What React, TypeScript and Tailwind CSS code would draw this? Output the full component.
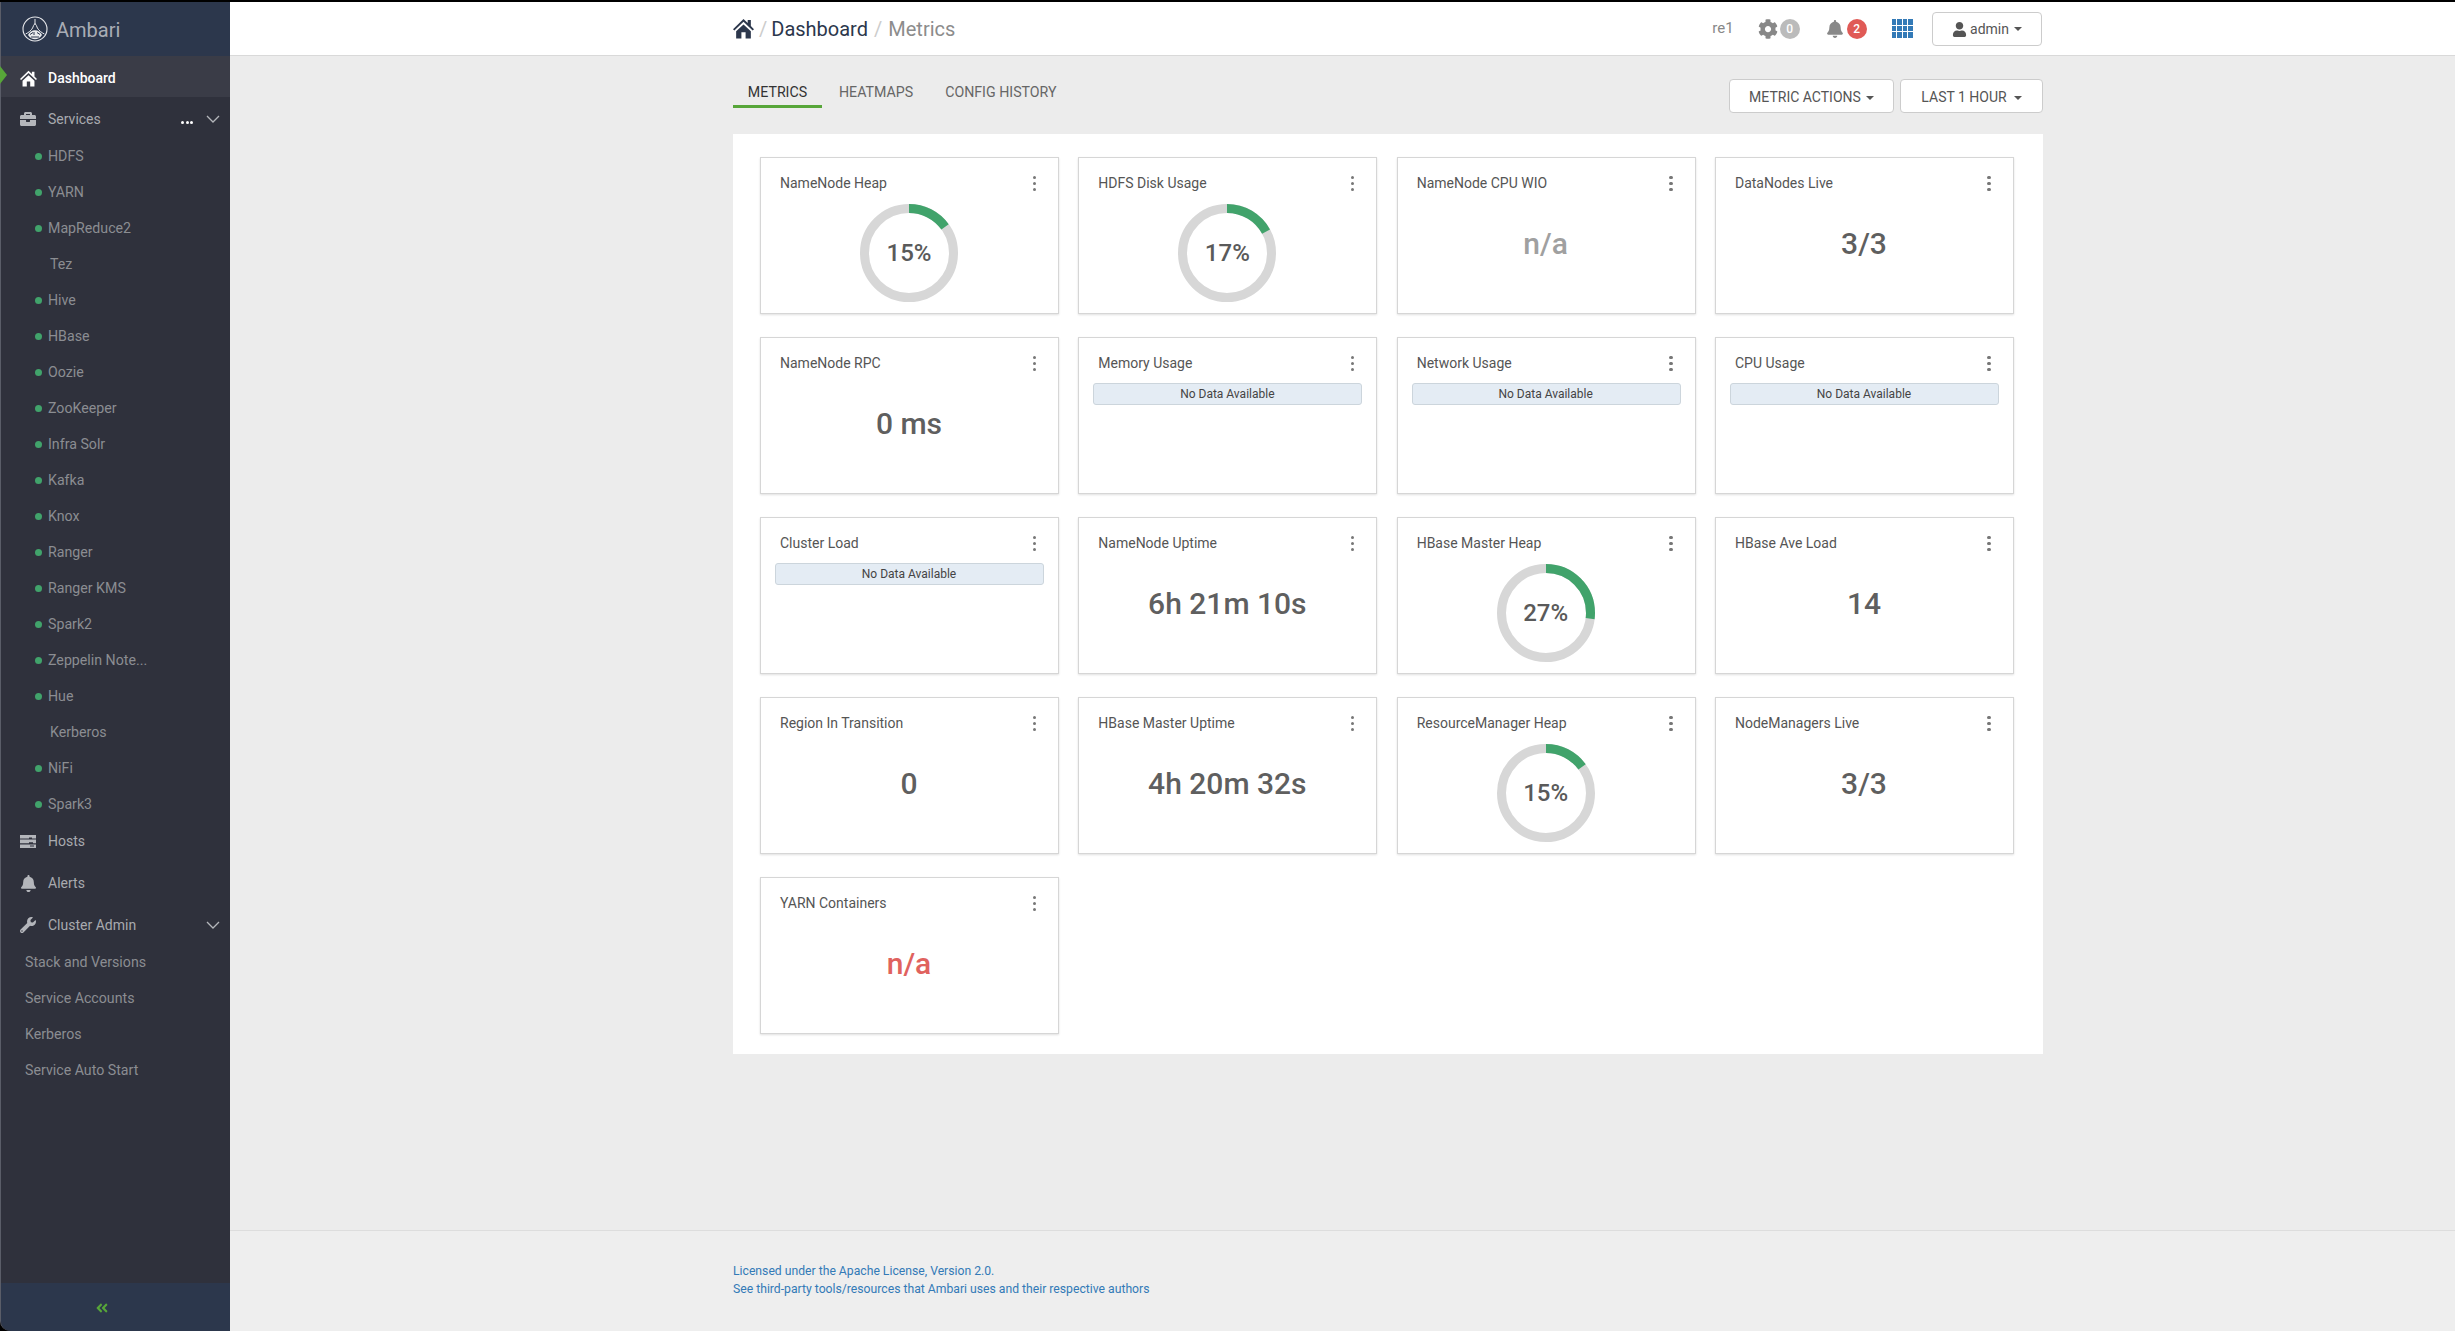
import { FaBriefcase, FaBell, FaWrench, FaCog, FaUser, FaAngleDoubleLeft } from 'react-icons/fa';

const services = [
  { name: 'HDFS', dot: true },
  { name: 'YARN', dot: true },
  { name: 'MapReduce2', dot: true },
  { name: 'Tez', dot: false },
  { name: 'Hive', dot: true },
  { name: 'HBase', dot: true },
  { name: 'Oozie', dot: true },
  { name: 'ZooKeeper', dot: true },
  { name: 'Infra Solr', dot: true },
  { name: 'Kafka', dot: true },
  { name: 'Knox', dot: true },
  { name: 'Ranger', dot: true },
  { name: 'Ranger KMS', dot: true },
  { name: 'Spark2', dot: true },
  { name: 'Zeppelin Note...', dot: true },
  { name: 'Hue', dot: true },
  { name: 'Kerberos', dot: false },
  { name: 'NiFi', dot: true },
  { name: 'Spark3', dot: true },
];

const adminLinks = ['Stack and Versions', 'Service Accounts', 'Kerberos', 'Service Auto Start'];

type Widget = {
  title: string;
  ring?: number;
  value?: string;
  color?: string;
  noData?: boolean;
};

const widgets: Widget[] = [
  { title: 'NameNode Heap', ring: 15 },
  { title: 'HDFS Disk Usage', ring: 17 },
  { title: 'NameNode CPU WIO', value: 'n/a', color: 'text-[#a0a0a0]' },
  { title: 'DataNodes Live', value: '3/3' },
  { title: 'NameNode RPC', value: '0 ms' },
  { title: 'Memory Usage', noData: true },
  { title: 'Network Usage', noData: true },
  { title: 'CPU Usage', noData: true },
  { title: 'Cluster Load', noData: true },
  { title: 'NameNode Uptime', value: '6h 21m 10s' },
  { title: 'HBase Master Heap', ring: 27 },
  { title: 'HBase Ave Load', value: '14' },
  { title: 'Region In Transition', value: '0' },
  { title: 'HBase Master Uptime', value: '4h 20m 32s' },
  { title: 'ResourceManager Heap', ring: 15 },
  { title: 'NodeManagers Live', value: '3/3' },
  { title: 'YARN Containers', value: 'n/a', color: 'text-[#e0625e]' },
];

function Chevron() {
  return (
    <svg width="14" height="8" viewBox="0 0 14 8" fill="none" stroke="#b4b6bb" strokeWidth="1.3">
      <path d="M1 1l6 6 6-6" />
    </svg>
  );
}

function Caret() {
  return <span className="ml-[5px] inline-block border-x-[4px] border-t-[4px] border-x-transparent border-t-[#555555] align-middle" />;
}

function HomeIcon({ size, color }: { size: number; color: string }) {
  return (
    <svg width={size} height={size} viewBox="0 0 20 20" fill={color}>
      <path d="M10 1L0 10.6l1.3 1.2L10 3.6l8.7 8.2 1.3-1.2-3-2.9V2h-3v2.8z" />
      <path d="M3 12.6l7-6.5 7 6.5V19.5h-5v-6H8v6H3z" />
    </svg>
  );
}

function AmbariLogo() {
  return (
    <svg width="26" height="26" viewBox="0 0 26 26" fill="none" stroke="#e8e9ec">
      <circle cx="13" cy="13" r="12" strokeWidth="1.1" />
      <path d="M13 3v5" strokeWidth="1" />
      <path d="M11.6 9.5l1.4-2 1.4 2 1 2.5c1.5 2.5 4 4.5 7 6M11.6 9.5l-1 2.5c-1.5 2.5-4 4.5-7 6" strokeWidth="1" />
      <path d="M6 19c1.5-3 4-4.8 7-4.8s5.500 1.800 7 4.800c-2 3-4.500 4.200-7 4.200s-5-1.200-7-4.200z" fill="#e8e9ec" stroke="none" />
      <path d="M8 18.500l3-2M12 16v3M15 16.500l3 2M9 21h8" stroke="#2c374c" strokeWidth="1" />
    </svg>
  );
}

function HostsIcon() {
  return (
    <svg width="16" height="13" viewBox="0 0 16 13" fill="#b4b6bb">
      <path d="M0 0h16v3.4H12v-1H9v1H0zM0 4.600h16v3.600h-3v-1H9v1H0zM0 9.400h16V13H0zM10 10.500v1h4v-1z" />
    </svg>
  );
}

function GridIcon() {
  const cells = Array.from({ length: 12 });
  return (
    <div className="grid grid-cols-4 gap-[1px]">
      {cells.map((_, i) => (
        <span key={i} className="h-[5.5px] w-[4.6px] bg-[#337ab7]" />
      ))}
    </div>
  );
}

function Ring({ percent }: { percent: number }) {
  const r = 44.5;
  const len = 2 * Math.PI * r;
  return (
    <div className="mt-[1px] grid justify-items-center pr-[1px]">
      <div className="grid h-[98px] w-[98px] place-items-center">
        <svg width="98" height="98" viewBox="0 0 98 98" fill="none" className="col-start-1 row-start-1 -rotate-90">
          <circle cx="49" cy="49" r={r} stroke="#d7d7d7" strokeWidth="9" />
          <circle cx="49" cy="49" r={r} stroke="#41a36b" strokeWidth="9" strokeDasharray={`${(len * percent) / 100} ${len}`} />
        </svg>
        <span className="col-start-1 row-start-1 text-[24px] font-medium text-[#5a5a5a]">{percent}%</span>
      </div>
    </div>
  );
}

function WidgetCard({ widget }: { widget: Widget }) {
  return (
    <div className="h-[157px] border border-[#d6d6d6] bg-white shadow-[0_1px_2px_rgba(0,0,0,0.12)]">
      <div className="flex h-[45px] items-center justify-between pl-[19px] pr-[22px] pt-[6px]">
        <span className="text-[14px] text-[#555555]">{widget.title}</span>
        <div className="flex flex-col gap-[2.5px]">
          <span className="h-[3.5px] w-[3.5px] rounded-full bg-[#777777]" />
          <span className="h-[3.5px] w-[3.5px] rounded-full bg-[#777777]" />
          <span className="h-[3.5px] w-[3.5px] rounded-full bg-[#777777]" />
        </div>
      </div>
      {widget.ring !== undefined && <Ring percent={widget.ring} />}
      {widget.value && (
        <div className={`mt-[19px] pr-[1px] text-center text-[30px] font-medium leading-[44px] ${widget.color ?? 'text-[#5f5f5f]'}`}>{widget.value}</div>
      )}
      {widget.noData && (
        <div className="mx-[14px] h-[22px] rounded-[3px] border border-[#ccd5dc] bg-[#e4ecf4] pr-[1px] text-center text-[12px] leading-[20px] text-[#444444]">
          No Data Available
        </div>
      )}
    </div>
  );
}

export default function App() {
  return (
    <div className="flex min-h-screen bg-black pt-[2px] font-['Roboto',sans-serif]">
      {/* 왼쪽 사이드바 */}
      <aside className="flex w-[230px] shrink-0 flex-col rounded-bl-[10px] border-l border-[#5a5d68] bg-[#2f313c]">
        <div className="flex h-[54px] items-center gap-[8px] bg-[#2c374c] pl-[21px]">
          <AmbariLogo />
          <span className="pt-[1px] text-[20px] text-[#a9adb5]">Ambari</span>
        </div>
        <div className="relative flex h-[41px] items-center gap-[11px] bg-[#3a3c47] pl-[19px] pt-[3px] text-[14px] font-medium text-white">
          <span className="absolute left-[-1px] top-[10px] border-y-[9px] border-l-[7px] border-y-transparent border-l-[#57a639]" />
          <HomeIcon size={17} color="#ffffff" />
          <span>Dashboard</span>
        </div>
        <div className="flex h-[41px] items-center pl-[19px] pr-[10px] pt-[3px] text-[14px] text-[#a8aaaf]">
          <FaBriefcase size={16} color="#b4b6bb" />
          <span className="ml-[12px] flex-1">Services</span>
          <span className="mr-[13px] flex gap-[1.5px] pt-[6px]">
            <i className="h-[3px] w-[3px] rounded-full bg-white" />
            <i className="h-[3px] w-[3px] rounded-full bg-white" />
            <i className="h-[3px] w-[3px] rounded-full bg-white" />
          </span>
          <Chevron />
        </div>
        {services.map((s) => (
          <div key={s.name} className="flex h-[36px] items-center pl-[34px] pt-[1px] text-[14.2px] text-[#8b8d92]">
            <span className={`h-[7px] w-[7px] rounded-full ${s.dot ? 'bg-[#41a36b]' : ''}`} />
            <span className={s.dot ? 'ml-[6px]' : 'ml-[8px]'}>{s.name}</span>
          </div>
        ))}
        <div className="flex h-[39px] items-center pl-[19px] text-[14px] text-[#a8aaaf]">
          <HostsIcon />
          <span className="ml-[12px]">Hosts</span>
        </div>
        <div className="flex h-[44px] items-center pl-[19px] text-[14px] text-[#a8aaaf]">
          <FaBell size={17} color="#b4b6bb" />
          <span className="ml-[11px]">Alerts</span>
        </div>
        <div className="flex h-[40px] items-center pl-[19px] pr-[10px] text-[14px] text-[#a8aaaf]">
          <FaWrench size={16} color="#b4b6bb" />
          <span className="ml-[12px] flex-1">Cluster Admin</span>
          <Chevron />
        </div>
        {adminLinks.map((l) => (
          <div key={l} className="flex h-[36px] items-center pl-[24px] text-[14.2px] text-[#8b8d92]">
            {l}
          </div>
        ))}
        <div className="flex-1" />
        <div className="flex h-[48px] items-center justify-center rounded-bl-[10px] bg-[#2c374c] pr-[28px] pt-[1px]">
          <FaAngleDoubleLeft size={14} color="#57a639" />
        </div>
      </aside>

      <div className="flex flex-1 flex-col bg-[#ececec]">
        {/* 상단 바 */}
        <header className="flex h-[54px] items-center border-b border-[#d9d9d9] bg-white pl-[503px] pr-[413px]">
          <HomeIcon size={21} color="#2c374c" />
          <span className="ml-[5px] text-[20px] text-[#cccccc]">/</span>
          <span className="ml-[4px] text-[20px] text-[#2c374c]">Dashboard</span>
          <span className="ml-[6px] text-[20px] text-[#cccccc]">/</span>
          <span className="ml-[6px] text-[20px] text-[#8c8c8c]">Metrics</span>
          <div className="flex-1" />
          <span className="text-[15px] text-[#888888]">re1</span>
          <span className="ml-[24px]"><FaCog size={20} color="#888888" /></span>
          <span className="ml-[2px] flex h-[20px] w-[20px] items-center justify-center rounded-full bg-[#bbbbbb] text-[12px] font-medium text-white">0</span>
          <span className="ml-[26px]"><FaBell size={18} color="#888888" /></span>
          <span className="ml-[3px] flex h-[20px] w-[20px] items-center justify-center rounded-full bg-[#e05a56] text-[12px] font-medium text-white">2</span>
          <span className="ml-[25px]"><GridIcon /></span>
          <button className="ml-[19px] flex h-[34px] w-[110px] items-center justify-center rounded-[4px] border border-[#cccccc] bg-white pt-[1px] text-[14px] text-[#555555]">
            <FaUser size={15} color="#555555" className="mr-[3px]" />
            admin
            <Caret />
          </button>
        </header>

        <main className="flex-1 pl-[503px] pr-[412px]">
          <div className="flex h-[78px] items-start justify-between">
            <div className="flex items-start pt-[26px] text-[14.2px] text-[#666666]">
              <div className="h-[26px] w-[89px] border-b-[3px] border-[#57a639] text-center text-[#333333]">METRICS</div>
              <div className="ml-[17px]">HEATMAPS</div>
              <div className="ml-[32px]">CONFIG HISTORY</div>
            </div>
            <div className="flex gap-[6px] pt-[23px]">
              <button className="h-[34px] w-[165px] rounded-[4px] border border-[#cccccc] bg-white pt-[2px] text-[14px] text-[#555555]">
                METRIC ACTIONS
                <Caret />
              </button>
              <button className="h-[34px] w-[143px] rounded-[4px] border border-[#cccccc] bg-white pt-[2px] text-[14px] text-[#555555]">
                LAST 1 HOUR
                <span className="ml-[2px]"><Caret /></span>
              </button>
            </div>
          </div>
          <div className="grid h-[920px] w-[1310px] grid-cols-[repeat(4,299px)] content-start gap-x-[19.33px] gap-y-[23px] bg-white pl-[27px] pt-[23px]">
            {widgets.map((w) => (
              <WidgetCard key={w.title} widget={w} />
            ))}
          </div>
        </main>

        <footer className="h-[101px] border-t border-[#dddddd] bg-[#eeeeee] pl-[503px] pt-[31px] text-[12.2px] leading-[18px] text-[#337ab7]">
          <div>Licensed under the Apache License, Version 2.0.</div>
          <div>See third-party tools/resources that Ambari uses and their respective authors</div>
        </footer>
      </div>
    </div>
  );
}
